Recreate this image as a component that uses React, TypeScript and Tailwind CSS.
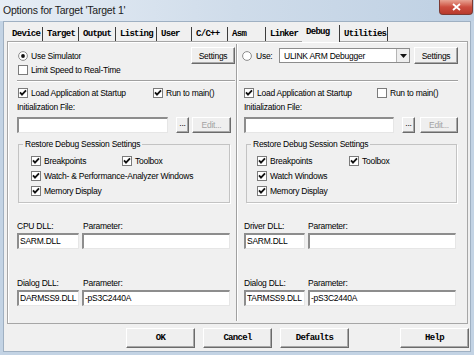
import React from "react";

function CheckBox({ checked }: { checked: boolean }) {
  return (
    <svg width="10" height="10" viewBox="0 0 10 10" className="shrink-0">
      <rect x="0.5" y="0.5" width="9" height="9" fill="#fff" stroke="#7b7b7b" />
      {checked && <path d="M2 4.4 L4 6.7 L8 2.4" fill="none" stroke="#111" strokeWidth="1.8" />}
    </svg>
  );
}

function Radio({ checked }: { checked: boolean }) {
  return (
    <svg width="10" height="10" viewBox="0 0 10 10" className="shrink-0">
      <circle cx="5" cy="5" r="4.4" fill="#fff" stroke="#8c8c8c" />
      {checked && <circle cx="5" cy="5" r="1.9" fill="#111" />}
    </svg>
  );
}

function Field({ className, value }: { className: string; value?: string }) {
  return (
    <div
      className={
        "h-[16px] bg-white border-t-2 border-l-2 border-b border-r border-t-[#8d8d8d] border-l-[#8d8d8d] border-b-[#e6e6e6] border-r-[#e6e6e6] pl-[1px] leading-[13px] " +
        className
      }
    >
      {value}
    </div>
  );
}

function Btn({ className, children }: { className: string; children?: React.ReactNode }) {
  return (
    <div
      className={
        "flex items-center justify-center bg-[#efefef] border border-t-white border-l-white border-r-[#6b6b6b] border-b-[#6b6b6b] shadow-[inset_-1px_-1px_0_#a8a8a8] " +
        className
      }
    >
      {children}
    </div>
  );
}

function CheckRow({ label, checked, className = "" }: { label: string; checked: boolean; className?: string }) {
  return (
    <div className={"flex items-center gap-[3px] " + className}>
      <CheckBox checked={checked} />
      <span>{label}</span>
    </div>
  );
}

const tabs = [
  { name: "Device", w: "w-[35px]" },
  { name: "Target", w: "w-[36px]" },
  { name: "Output", w: "w-[37px]" },
  { name: "Listing", w: "w-[41px]" },
  { name: "User", w: "w-[35px]" },
  { name: "C/C++", w: "w-[36px]" },
  { name: "Asm", w: "w-[38px]" },
  { name: "Linker", w: "w-[36px]" },
  { name: "Debug", w: "w-[38px]" },
  { name: "Utilities", w: "w-[48px]" },
];

type Side = {
  left: boolean;
  dll: string;
  dialog: string;
  watch: string;
  runMain: boolean;
};

function Column({ side }: { side: Side }) {
  const L = side.left;
  return (
    <div className={"flex flex-col " + (L ? "w-[228px]" : "flex-1")}>
      {/* simulator / debugger */}
      {L ? (
        <div className="mt-[5px] h-[17px] flex items-center">
          <div className="ml-[10px] flex items-center gap-[3px]">
            <Radio checked={true} />
            <span>Use Simulator</span>
          </div>
          <Btn className="ml-auto mr-[1px] w-[44px] h-[17px]">Settings</Btn>
        </div>
      ) : (
        <div className="mt-[5px] h-[17px] flex items-center">
          <div className="ml-[4px] w-[37px] flex items-center gap-[4px]">
            <Radio checked={false} />
            <span>Use:</span>
          </div>
          <div className="w-[131px] h-[15px] bg-white border border-[#8d8d8d] flex items-center">
            <span className="pl-[4px] flex-1">ULINK ARM Debugger</span>
            <div className="w-[13px] h-full bg-[#eeeeee] border-l border-[#b5b5b5] flex items-center justify-center">
              <svg width="7" height="4" viewBox="0 0 7 4">
                <path d="M0 0 H7 L3.5 4 Z" fill="#111" />
              </svg>
            </div>
          </div>
          <Btn className="ml-[4px] w-[44px] h-[17px]">Settings</Btn>
        </div>
      )}
      <div className="h-[12px] flex items-center">
        {L && <CheckRow className="ml-[10px]" label="Limit Speed to Real-Time" checked={false} />}
      </div>
      <div
        className={
          "mt-[4px] h-[2px] border-t border-b border-t-[#a0a0a0] border-b-white " +
          (L ? "ml-[9px] mr-[1px]" : "ml-[1px] mr-[9px]")
        }
      />
      <div className={"mt-[5px] h-[12px] flex items-center " + (L ? "ml-[10px]" : "ml-[6px]")}>
        <CheckRow className={L ? "w-[135px]" : "w-[133px]"} label="Load Application at Startup" checked={true} />
        <CheckRow label="Run to main()" checked={side.runMain} />
      </div>
      <div className={"mt-[2px] h-[12px] flex items-center " + (L ? "ml-[9px]" : "ml-[6px]")}>
        Initialization File:
      </div>
      <div className={"mt-[4px] flex " + (L ? "ml-[9px]" : "ml-[6px]")}>
        <Field className={L ? "w-[151px]" : "w-[150px]"} />
        <Btn className="h-[16px] w-[13px] ml-[8px]">
          <span className="leading-[8px] pb-[4px]">...</span>
        </Btn>
        <Btn className={"h-[16px] text-[#a3a3a3] " + (L ? "ml-[3px] w-[39px]" : "ml-[5px] w-[38px]")}>Edit...</Btn>
      </div>
      <fieldset
        className={
          "mt-[5px] border border-[#c3c3c3] shadow-[1px_1px_0_#fff] pb-[4px] " +
          (L ? "ml-[10px] w-[212px] pl-[12px]" : "ml-[8px] w-[211px] pl-[10px]")
        }
      >
        <legend className={"h-[12px] leading-[12px] px-[2px] " + (L ? "ml-[-8px]" : "ml-[-6px]")}>
          Restore Debug Session Settings
        </legend>
        <div className="pt-[3px] flex flex-col">
          <div className="h-[15px] flex items-center">
            <CheckRow className={L ? "w-[91px]" : "w-[92px]"} label="Breakpoints" checked={true} />
            <CheckRow label="Toolbox" checked={true} />
          </div>
          <CheckRow className="h-[15px]" label={side.watch} checked={true} />
          <CheckRow className="h-[15px]" label="Memory Display" checked={true} />
        </div>
      </fieldset>
      <div className={"mt-[17px] h-[12px] flex items-center " + (L ? "ml-[9px]" : "ml-[6px]")}>
        <span className={L ? "w-[66px]" : "w-[64px]"}>{L ? "CPU DLL:" : "Driver DLL:"}</span>
        <span>Parameter:</span>
      </div>
      <div className={"mt-[1px] flex " + (L ? "ml-[9px]" : "ml-[6px]")}>
        <Field className={L ? "w-[62px]" : "w-[61px]"} value={side.dll} />
        <Field className="ml-[3px] w-[148px]" />
      </div>
      <div className={"mt-[28px] h-[12px] flex items-center " + (L ? "ml-[9px]" : "ml-[6px]")}>
        <span className={L ? "w-[66px]" : "w-[64px]"}>Dialog DLL:</span>
        <span>Parameter:</span>
      </div>
      <div className={"mt-[1px] flex " + (L ? "ml-[9px]" : "ml-[6px]")}>
        <Field className={L ? "w-[62px]" : "w-[61px]"} value={side.dialog} />
        <Field className="ml-[3px] w-[148px]" value="-pS3C2440A" />
      </div>
    </div>
  );
}

export default function App() {
  const mono = "font-['Liberation_Mono',monospace] text-[9px] tracking-[-0.7px]";
  return (
    <div className="w-[474px] h-[355px] overflow-hidden bg-[#c3d3e4] flex flex-col font-['Liberation_Sans',Arial,sans-serif] text-[8.5px] tracking-[-0.25px] leading-[12px] text-black">
      {/* title bar */}
      <div className="h-[21px] flex items-start bg-linear-to-r from-[#e6edf5] via-[#cfdcea] to-[#bed0e3]">
        <span className="pl-[3px] pt-[4px] text-[10.5px] tracking-[-0.2px] leading-[13px] text-[#1b1b1b]">
          Options for Target 'Target 1'
        </span>
        <div className="ml-auto mr-[1px] w-[34px] h-[15px] rounded-b-[4px] border border-t-0 border-[#7c3a33] bg-linear-to-b from-[#e7a293] via-[#cc4d3f] to-[#b83a2d] flex items-center justify-center">
          <svg width="9" height="8" viewBox="0 0 9 8">
            <path d="M1 1 L8 7 M8 1 L1 7" stroke="#fff" strokeWidth="1.8" />
          </svg>
        </div>
      </div>

      {/* client area */}
      <div className="mx-[3px] h-[331px] bg-[#f0f0f0] border border-[#9fb0c2] flex flex-col">
        <div className={"h-[19px] ml-[4px] flex items-end font-semibold " + mono}>
          {tabs.map((t) => {
            const sel = t.name === "Debug";
            return (
              <div
                key={t.name}
                className={
                  t.w +
                  " pl-[4px] leading-[14px] " +
                  (sel
                    ? "h-[17px] relative z-10 -mb-[1px] border-r border-[#3c3c3c] bg-[#f0f0f0]"
                    : t.name === "Linker"
                    ? "h-[14px]"
                    : "h-[14px] border-r border-[#3c3c3c]")
                }
              >
                {t.name}
              </div>
            );
          })}
        </div>

        {/* tab panel */}
        <div className="ml-[3px] w-[461px] h-[283px] border border-[#a6a6a6] shadow-[inset_1px_1px_0_#fff] flex">
          <Column side={{ left: true, dll: "SARM.DLL", dialog: "DARMSS9.DLL", watch: "Watch- & Performance-Analyzer Windows", runMain: true }} />
          <div className="w-[2px] mt-[2px] mb-[2px] border-l border-r border-l-[#a0a0a0] border-r-white" />
          <Column side={{ left: false, dll: "SARM.DLL", dialog: "TARMSS9.DLL", watch: "Watch Windows", runMain: false }} />
        </div>

        {/* buttons */}
        <div className={"mt-[4px] ml-[122px] flex font-semibold " + mono}>
          <Btn className="w-[69px] h-[20px]">OK</Btn>
          <Btn className="ml-[8px] w-[69px] h-[20px]">Cancel</Btn>
          <Btn className="ml-[8px] w-[69px] h-[20px]">Defaults</Btn>
          <Btn className="ml-[51px] w-[69px] h-[20px]">Help</Btn>
        </div>
      </div>
    </div>
  );
}
